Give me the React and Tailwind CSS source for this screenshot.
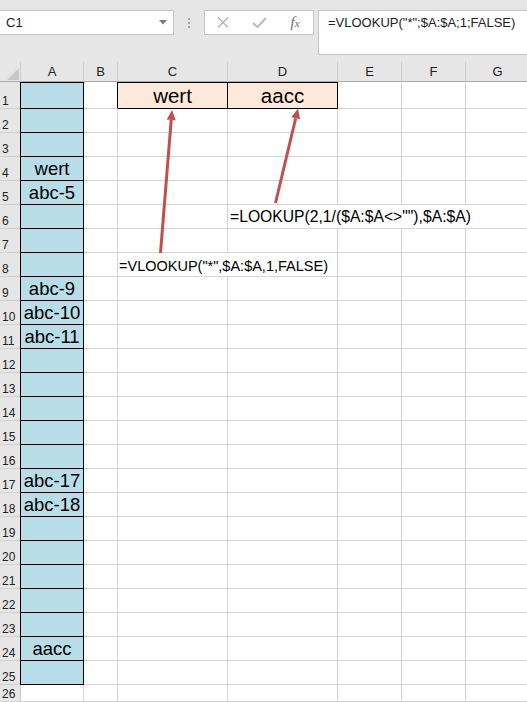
import React from 'react';

const aValues = { 4: 'wert', 5: 'abc-5', 9: 'abc-9', 10: 'abc-10', 11: 'abc-11', 17: 'abc-17', 18: 'abc-18', 24: 'aacc' };
const letters = ['A', 'B', 'C', 'D', 'E', 'F', 'G'];
const rows = Array.from({ length: 26 }, (_, i) => i + 1);

// arrow drawn from tail to tip, head is a small triangle
const Arrow = ({ from, to }) => {
  const [x1, y1] = from;
  const [x2, y2] = to;
  const len = Math.hypot(x2 - x1, y2 - y1);
  const ux = (x2 - x1) / len;
  const uy = (y2 - y1) / len;
  const bx = x2 - ux * 10;
  const by = y2 - uy * 10;
  const nx = -uy;
  const ny = ux;
  return (
    <g>
      <line x1={x1} y1={y1} x2={bx} y2={by} stroke="#c0504d" strokeWidth="3" />
      <polygon
        points={`${x2},${y2} ${bx + nx * 4.5},${by + ny * 4.5} ${bx - nx * 4.5},${by - ny * 4.5}`}
        fill="#c0504d"
      />
    </g>
  );
};

const cellClass = (r, c) => {
  if (c === 'A') {
    if (r === 1) return 'bg-[#b7dee8] border border-black flex items-center justify-center';
    if (r <= 25) return 'bg-[#b7dee8] border-l border-r border-b border-black flex items-center justify-center';
    return 'border-l border-r border-b border-l-[#c8c8c8] border-r-[#d4d4d4] border-b-[#d4d4d4]';
  }
  if (r === 1 && c === 'B') return 'border-r border-b border-r-black border-b-[#d4d4d4]';
  if (r === 1 && (c === 'C' || c === 'D')) return 'bg-[#fde9d9] border-t border-r border-b border-black flex items-center justify-center';
  return 'border-r border-b border-[#d4d4d4]';
};

const cellContent = (r, c) => {
  if (c === 'A' && aValues[r]) {
    return <span className="text-[18.5px] leading-[23px] text-black">{aValues[r]}</span>;
  }
  if (r === 1 && c === 'C') return <span className="text-[20.5px] leading-[25px] text-black">wert</span>;
  if (r === 1 && c === 'D') return <span className="text-[20.5px] leading-[25px] text-black">aacc</span>;
  if (r === 6 && c === 'D') {
    return (
      <span className="relative z-10 h-full inline-flex items-end pb-[3px] pl-[2px] pr-[1px] bg-white whitespace-nowrap text-[15.7px] leading-none text-black">
        =LOOKUP(2,1/($A:$A&lt;&gt;""),$A:$A)
      </span>
    );
  }
  if (r === 8 && c === 'C') {
    return (
      <span className="relative z-10 h-full inline-flex items-end pb-[3px] pl-[1px] pr-[1px] bg-white whitespace-nowrap text-[14.5px] leading-none text-black">
        =VLOOKUP("*",$A:$A,1,FALSE)
      </span>
    );
  }
  return null;
};

const App = () => {
  return (
    <div className="relative w-[527px] h-[702px] overflow-hidden bg-white font-['Liberation_Sans',Arial,sans-serif]">
      {/* formula bar */}
      <div className="h-[62px] bg-[#e6e6e6] flex items-start pt-[10px]">
        <div className="w-[174px] h-[25px] bg-white border border-l-0 border-[#c6c6c6] flex items-center justify-between pl-[6px] pr-[6px]">
          <span className="text-[13px] leading-[16px] text-[#222]">C1</span>
          <svg width="8" height="5" viewBox="0 0 8 5">
            <path d="M0 0 H8 L4 4.5 Z" fill="#7a7a7a" />
          </svg>
        </div>
        <div className="w-[30px] h-[25px] flex flex-col items-center justify-center gap-[2px]">
          <div className="w-[2px] h-[2px] bg-[#a6a6a6]" />
          <div className="w-[2px] h-[2px] bg-[#a6a6a6]" />
          <div className="w-[2px] h-[2px] bg-[#a6a6a6]" />
        </div>
        <div className="w-[110px] h-[25px] bg-white border border-[#c6c6c6] flex">
          <div className="w-[36px] flex items-center justify-center">
            <svg width="12" height="11" viewBox="0 0 12 11">
              <path d="M1 0.5 L11 10.5 M11 0.5 L1 10.5" stroke="#b4b4b4" strokeWidth="1.4" />
            </svg>
          </div>
          <div className="w-[36px] flex items-center justify-center">
            <svg width="15" height="11" viewBox="0 0 15 11">
              <path d="M1 6 L5.5 10 L14 1" stroke="#bdbdbd" strokeWidth="2.2" fill="none" />
            </svg>
          </div>
          <div className="w-[36px] flex items-center justify-center">
            <span className="font-['Liberation_Serif',serif] italic text-[15px] leading-none text-[#6b6b6b]">
              f<span className="text-[11px]">x</span>
            </span>
          </div>
        </div>
        <div className="ml-[4px] flex-1 h-[45px] bg-white border border-r-0 border-[#c6c6c6] pl-[9px] pt-[4px] text-[13px] leading-[16px] text-[#222] whitespace-nowrap">
          =VLOOKUP("*";$A:$A;1;FALSE)
        </div>
      </div>

      {/* sheet */}
      <div className="grid grid-cols-[20px_64px_34px_110px_110px_64px_64px_64px] grid-rows-[20px_27px_repeat(24,24px)_17px] w-[530px]">
        <div className="bg-[#e6e6e6] border-b border-[#ababab] flex items-end justify-end pr-[1px] pb-[1px]">
          <svg width="12" height="12" viewBox="0 0 12 12">
            <path d="M12 0 V12 H0 Z" fill="#c8c8c8" />
          </svg>
        </div>
        {letters.map((l) => (
          <div
            key={l}
            className={
              l === 'A'
                ? 'bg-[#e6e6e6] border-l border-r border-b border-l-[#cdcdcd] border-r-[#cdcdcd] border-b-[#ababab] flex items-center justify-center text-[13px] leading-[19px] text-[#222]'
                : 'bg-[#e6e6e6] border-r border-b border-r-[#cdcdcd] border-b-[#ababab] flex items-center justify-center text-[13px] leading-[19px] text-[#222]'
            }
          >
            {l}
          </div>
        ))}

        {rows.map((r) => (
          <React.Fragment key={r}>
            <div className="bg-[#e6e6e6] border-b border-[#d0d0d0] flex items-end pl-[2px] pb-[1px] text-[12px] leading-none text-[#222]">
              {r}
            </div>
            {letters.map((c) => (
              <div key={c} className={cellClass(r, c)}>
                {cellContent(r, c)}
              </div>
            ))}
          </React.Fragment>
        ))}
      </div>

      {/* arrows */}
      <svg className="absolute top-0 left-0 z-20 pointer-events-none" width="527" height="702" viewBox="0 0 527 702">
        <Arrow from={[160.5, 253]} to={[172, 110]} />
        <Arrow from={[275.5, 203]} to={[298, 108.5]} />
      </svg>
    </div>
  );
};

export default App;
